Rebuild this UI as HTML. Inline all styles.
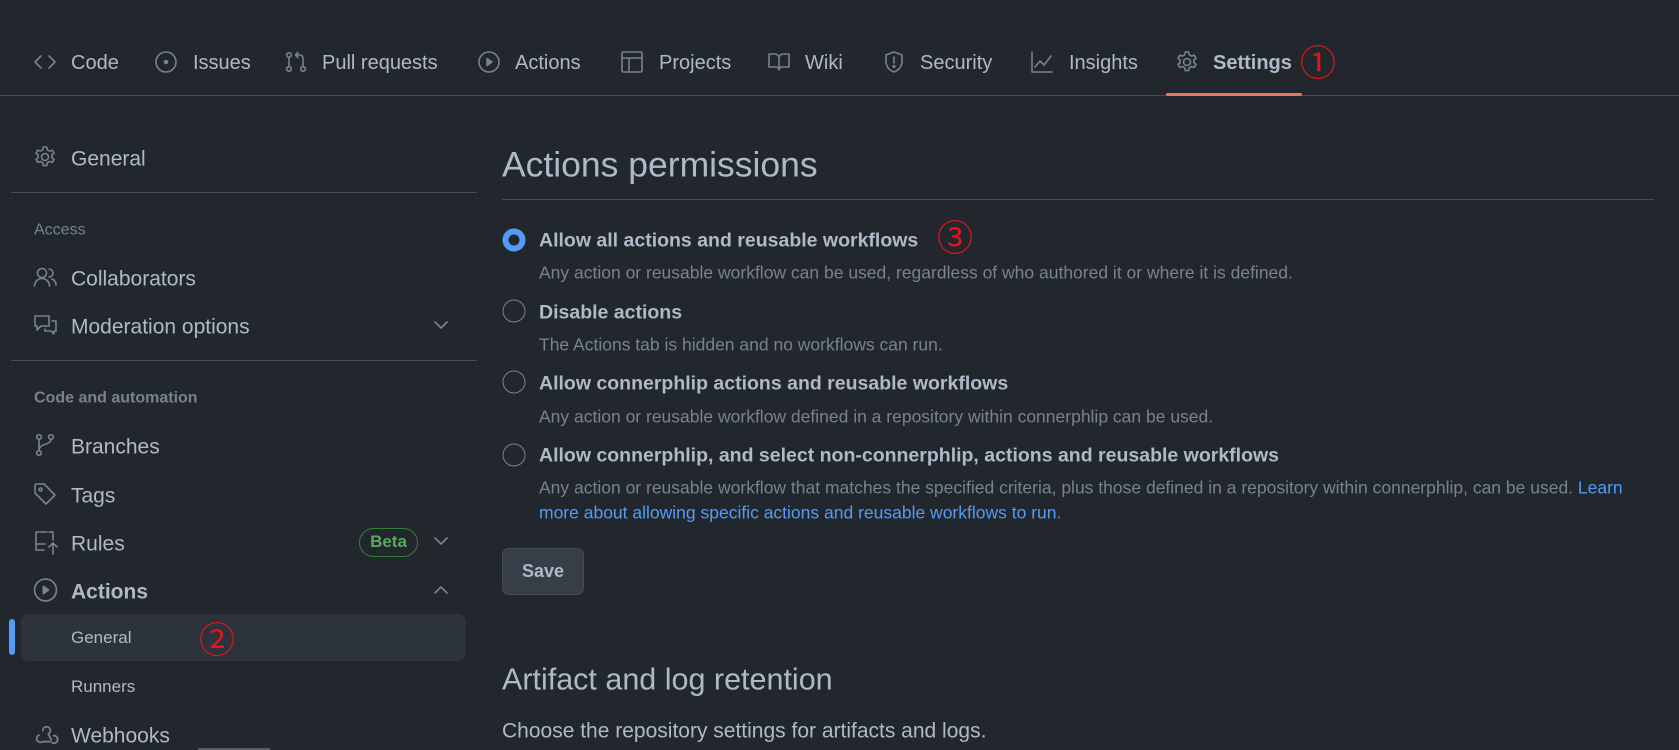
<!DOCTYPE html>
<html><head><meta charset="utf-8"><style>
*{margin:0;padding:0;box-sizing:border-box}
body{width:1679px;height:750px;background:#22272e;color:#adbac7;font-family:"Liberation Sans","Noto Sans CJK SC",sans-serif;position:relative;overflow:hidden}
.a{position:absolute;white-space:nowrap;transform:translateY(-50%);line-height:1.2}
.nav{font-size:20px;color:#adbac7}
.ic{position:absolute;transform:translateY(-50%);fill:none;stroke:#768390;stroke-width:1.6;stroke-linecap:round;stroke-linejoin:round}
.side{font-size:21px}
.sec{font-size:16px;color:#768390;font-weight:bold}
.lbl{font-size:19.5px;font-weight:bold;color:#adbac7}
.desc{font-size:17.5px;color:#768390}
.radio{position:absolute;width:23px;height:23px;border-radius:50%;border:1.5px solid #768390;transform:translate(-50%,-50%)}
.radio.on{border:6px solid #539bf5;background:#22272e}
.red{color:#e5141a;font-size:36px}
.hr{position:absolute;height:1px;background:#444c56}
</style></head><body>

<div class="hr" style="left:0;top:95px;width:1679px"></div>
<div style="position:absolute;left:1166px;top:93px;width:136px;height:3px;background:#ec775c;border-radius:2px"></div>

<svg class="ic" style="left:33px;top:62px" width="24" height="24" viewBox="0 0 24 24"><path d="M8 6l-6 6 6 6M16 6l6 6-6 6"/></svg>
<div class="a nav" style="left:71px;top:63px">Code</div>
<svg class="ic" style="left:154px;top:62px" width="24" height="24" viewBox="0 0 24 24"><circle cx="12" cy="12" r="10"/><circle cx="12" cy="12" r="1.5" fill="#768390"/></svg>
<div class="a nav" style="left:193px;top:63px">Issues</div>
<svg class="ic" style="left:284px;top:62px" width="24" height="24" viewBox="0 0 24 24"><circle cx="5" cy="5" r="2.3"/><circle cx="5" cy="19" r="2.3"/><circle cx="19" cy="19" r="2.3"/><path d="M5 7.5v9M19 16.5V8a3 3 0 0 0-3-3h-4M14 2.5L11.5 5 14 7.5"/></svg>
<div class="a nav" style="left:322px;top:63px">Pull requests</div>
<svg class="ic" style="left:477px;top:62px" width="24" height="24" viewBox="0 0 24 24"><circle cx="12" cy="12" r="10"/><path d="M10 8.5l5 3.5-5 3.5z" fill="#768390"/></svg>
<div class="a nav" style="left:515px;top:63px">Actions</div>
<svg class="ic" style="left:620px;top:62px" width="24" height="24" viewBox="0 0 24 24"><rect x="2" y="2" width="20" height="20" rx="1.5"/><path d="M2 8h20M9 8v14"/></svg>
<div class="a nav" style="left:659px;top:63px">Projects</div>
<svg class="ic" style="left:767px;top:62px" width="24" height="24" viewBox="0 0 24 24"><path d="M2 4h6a4 4 0 0 1 4 4v12a3 3 0 0 0-3-3H2zM22 4h-6a4 4 0 0 0-4 4v12a3 3 0 0 1 3-3h7z"/></svg>
<div class="a nav" style="left:805px;top:63px">Wiki</div>
<svg class="ic" style="left:882px;top:62px" width="24" height="24" viewBox="0 0 24 24"><path d="M12 2l8 3v6c0 6-4 9.5-8 11-4-1.5-8-5-8-11V5z"/><path d="M12 7v6"/><circle cx="12" cy="16.5" r=".8" fill="#768390"/></svg>
<div class="a nav" style="left:920px;top:63px">Security</div>
<svg class="ic" style="left:1030px;top:62px" width="24" height="24" viewBox="0 0 24 24"><path d="M2 2v20h20M5 17l5-6 4 4 7-9"/></svg>
<div class="a nav" style="left:1069px;top:63px">Insights</div>
<svg class="ic" style="left:1175px;top:62px" width="24" height="24" viewBox="0 0 24 24"><circle cx="12" cy="12" r="3.5"/><path d="M10.3 2h3.4l.6 2.8 2.3 1.3 2.7-.9 1.7 2.9-2.1 1.9v2.6l2.1 1.9-1.7 2.9-2.7-.9-2.3 1.3-.6 2.8h-3.4l-.6-2.8-2.3-1.3-2.7.9-1.7-2.9 2.1-1.9v-2.6L3 8.1l1.7-2.9 2.7.9 2.3-1.3z"/></svg>
<div class="a nav" style="left:1213px;top:63px;font-weight:bold">Settings</div>
<div class="a red" style="left:1300px;top:63px">①</div>

<!-- sidebar -->
<svg class="ic" style="left:33px;top:157px" width="24" height="24" viewBox="0 0 24 24"><circle cx="12" cy="12" r="3.5"/><path d="M10.3 2h3.4l.6 2.8 2.3 1.3 2.7-.9 1.7 2.9-2.1 1.9v2.6l2.1 1.9-1.7 2.9-2.7-.9-2.3 1.3-.6 2.8h-3.4l-.6-2.8-2.3-1.3-2.7.9-1.7-2.9 2.1-1.9v-2.6L3 8.1l1.7-2.9 2.7.9 2.3-1.3z"/></svg>
<div class="a side" style="left:71px;top:159px">General</div>
<div class="hr" style="left:11px;top:192px;width:466px"></div>
<div class="a sec" style="left:34px;top:230px;font-weight:normal">Access</div>
<svg class="ic" style="left:33px;top:277px" width="26" height="24" viewBox="0 0 26 24"><circle cx="9" cy="8" r="4.5"/><path d="M1.5 21a7.5 7.5 0 0 1 15 0M16 4a4 4 0 0 1 0 8M19 14a6 6 0 0 1 4 6"/></svg>
<div class="a side" style="left:71px;top:279px">Collaborators</div>
<svg class="ic" style="left:33px;top:325px" width="26" height="24" viewBox="0 0 26 24"><path d="M2 3h14v10H8l-4 4v-4H2zM19 8h4v10h-2v3l-3-3h-6v-2"/></svg>
<div class="a side" style="left:71px;top:327px">Moderation options</div>
<svg class="ic" style="left:433px;top:325px" width="16" height="16" viewBox="0 0 16 16"><path d="M2 5l6 6 6-6"/></svg>
<div class="hr" style="left:11px;top:360px;width:466px"></div>
<div class="a sec" style="left:34px;top:398px">Code and automation</div>
<svg class="ic" style="left:33px;top:445px" width="24" height="24" viewBox="0 0 24 24"><circle cx="6" cy="4" r="2.3"/><circle cx="6" cy="20" r="2.3"/><circle cx="18" cy="4" r="2.3"/><path d="M6 6.3v11.4M18 6.3c0 6-12 4-12 11"/></svg>
<div class="a side" style="left:71px;top:447px">Branches</div>
<svg class="ic" style="left:33px;top:494px" width="24" height="24" viewBox="0 0 24 24"><path d="M2 3v8l11 11 9-9L11 2H3z"/><circle cx="7.5" cy="7.5" r="1.5"/></svg>
<div class="a side" style="left:71px;top:496px">Tags</div>
<svg class="ic" style="left:33px;top:542px" width="26" height="26" viewBox="0 0 26 26"><path d="M14 3H3v18h8M3 15h9M16 3h4v8M20 25V14M16 18l4-4 4 4"/></svg>
<div class="a side" style="left:71px;top:544px">Rules</div>
<div style="position:absolute;left:359px;top:528px;width:59px;height:29px;border:1.5px solid #347d39;border-radius:15px;color:#57ab5a;font-size:17px;font-weight:bold;text-align:center;line-height:26px">Beta</div>
<svg class="ic" style="left:433px;top:541px" width="16" height="16" viewBox="0 0 16 16"><path d="M2 5l6 6 6-6"/></svg>
<svg class="ic" style="left:33px;top:590px" width="25" height="25" viewBox="0 0 24 24"><circle cx="12" cy="12" r="10.5"/><path d="M10 8.5l5 3.5-5 3.5z" fill="#768390"/></svg>
<div class="a side" style="left:71px;top:592px;font-weight:bold">Actions</div>
<svg class="ic" style="left:433px;top:590px" width="16" height="16" viewBox="0 0 16 16"><path d="M2 11l6-6 6 6"/></svg>
<div style="position:absolute;left:21px;top:614px;width:445px;height:47px;background:#2d333b;border-radius:8px"></div>
<div style="position:absolute;left:9px;top:619px;width:6px;height:36px;background:#539bf5;border-radius:3px"></div>
<div class="a" style="left:71px;top:638px;font-size:17px">General</div>
<div class="a red" style="left:199px;top:640px">②</div>
<div class="a" style="left:71px;top:687px;font-size:17px">Runners</div>
<svg class="ic" style="left:33px;top:734px" width="26" height="26" viewBox="0 0 24 24"><path d="M9 9a3.5 3.5 0 1 1 5 3l3 5.5M5.5 13a3.5 3.5 0 1 0 3.5 6h7M19 13.5a3.5 3.5 0 1 1-1.5 6.5"/></svg>
<div class="a side" style="left:71px;top:736px">Webhooks</div>
<div class="hr" style="left:198px;top:748px;width:72px;background:#545d68;height:2px"></div>

<!-- main -->
<div class="a" style="left:502px;top:165px;font-size:35.5px;color:#adbac7">Actions permissions</div>
<div class="hr" style="left:502px;top:199px;width:1152px"></div>

<div class="radio on" style="left:514px;top:240px"></div>
<div class="a lbl" style="left:539px;top:241px">Allow all actions and reusable workflows</div>
<div class="a red" style="left:937px;top:238px">③</div>
<div class="a desc" style="left:539px;top:273px">Any action or reusable workflow can be used, regardless of who authored it or where it is defined.</div>

<div class="radio" style="left:514px;top:311px"></div>
<div class="a lbl" style="left:539px;top:313px">Disable actions</div>
<div class="a desc" style="left:539px;top:345px">The Actions tab is hidden and no workflows can run.</div>

<div class="radio" style="left:514px;top:382px"></div>
<div class="a lbl" style="left:539px;top:384px">Allow connerphlip actions and reusable workflows</div>
<div class="a desc" style="left:539px;top:417px">Any action or reusable workflow defined in a repository within connerphlip can be used.</div>

<div class="radio" style="left:514px;top:455px"></div>
<div class="a lbl" style="left:539px;top:456px">Allow connerphlip, and select non-connerphlip, actions and reusable workflows</div>
<div class="a desc" style="left:539px;top:488px">Any action or reusable workflow that matches the specified criteria, plus those defined in a repository within connerphlip, can be used. <span style="color:#539bf5">Learn</span></div>
<div class="a desc" style="left:539px;top:513px"><span style="color:#539bf5">more about allowing specific actions and reusable workflows to run</span>.</div>

<div style="position:absolute;left:502px;top:548px;width:82px;height:47px;background:#373e47;border:1px solid #444c56;border-radius:7px;font-size:18px;font-weight:bold;color:#adbac7;text-align:center;line-height:45px">Save</div>

<div class="a" style="left:502px;top:680px;font-size:30.5px">Artifact and log retention</div>
<div class="a" style="left:502px;top:731px;font-size:21px">Choose the repository settings for artifacts and logs.</div>
</body></html>
